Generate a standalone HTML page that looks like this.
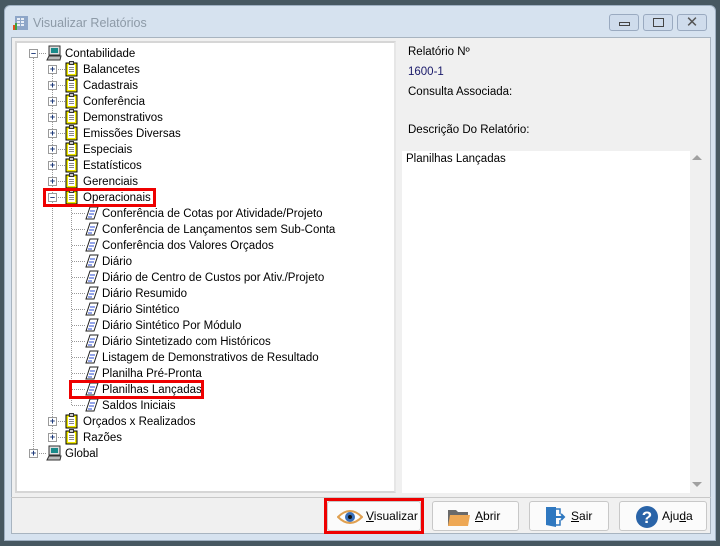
<!DOCTYPE html>
<html><head><meta charset="utf-8"><style>
*{box-sizing:border-box;margin:0;padding:0}
body{width:720px;height:546px;background:#475861;position:relative;overflow:hidden;font-family:"Liberation Sans",sans-serif;font-size:11.5px;color:#000}
.win{position:absolute;left:4px;top:5px;width:712px;height:536px;background:#d6e2ef;border:1px solid #9fb0c2;border-radius:6px 6px 0 0}
.title{position:absolute;left:33px;top:16px;font-size:12.5px;color:#8d9aa7}
.tb{position:absolute;top:14px;width:30px;height:17px;border:1px solid #9aaac0;border-radius:3px;background:#cfdcec}
.client{position:absolute;left:11px;top:37px;width:700px;height:497px;background:#f0f0f0;border:1px solid #a8b4c0}
.tree{position:absolute;left:15px;top:41px;width:381px;height:452px;background:#fff;border:2px solid #d6d6d6;border-right-color:#e6e6e6}
.row{position:absolute;height:16px;line-height:16px;white-space:nowrap}
.pm{position:absolute;width:9px;height:9px;border:1px solid #9a9a9a;background:#fff;font-size:9px;line-height:7px;text-align:center;color:#1d3a7a;font-weight:bold}
.hl{position:absolute;border-top:1px dotted #999;height:0}
.vl{position:absolute;border-left:1px dotted #999;width:0}
.red{position:absolute;border:3px solid #e00}
.btn{position:absolute;top:501px;height:30px;background:#fbfbfb;border:1px solid #c8c8c8;border-radius:3px;font-size:12px;line-height:28px}
.u{text-decoration:underline}
</style></head><body>
<div class="win"></div>
<svg style="position:absolute;left:13px;top:15px" width="16" height="16"><rect x="2" y="1" width="13" height="14" fill="#8ea6c8"/><g fill="#e8eef6"><rect x="4" y="3" width="3" height="2"/><rect x="8" y="3" width="3" height="2"/><rect x="4" y="6" width="3" height="2"/><rect x="8" y="6" width="3" height="2"/><rect x="4" y="9" width="3" height="2"/><rect x="8" y="9" width="3" height="2"/></g><rect x="0" y="10" width="2" height="5" fill="#e05020"/><rect x="2" y="8" width="2" height="7" fill="#40a040"/></svg>
<div class="title">Visualizar Relatórios</div>
<div class="tb" style="left:609px"><div style="position:absolute;left:9px;top:7px;width:11px;height:4px;border:1px solid #444"></div></div>
<div class="tb" style="left:643px"><div style="position:absolute;left:9px;top:3px;width:11px;height:9px;border:1px solid #444"></div></div>
<div class="tb" style="left:677px;font-size:15px;text-align:center;line-height:15px;color:#555">✕</div>
<div class="client"></div>
<div class="tree"></div>
<div id="t"></div>
<div style="position:absolute;left:408px;top:46px">Relatório Nº</div>
<div style="position:absolute;left:408px;top:66px;color:#1a1a6a">1600-1</div>
<div style="position:absolute;left:408px;top:86px">Consulta Associada:</div>
<div style="position:absolute;left:408px;top:124px">Descrição Do Relatório:</div>
<div style="position:absolute;left:402px;top:151px;width:304px;height:342px;background:#fff"></div>
<div style="position:absolute;left:690px;top:151px;width:16px;height:342px;background:#f0f0f0"></div>
<div style="position:absolute;left:692px;top:155px;width:0;height:0;border:5px solid transparent;border-bottom-color:#a0a0a0;border-top:0"></div>
<div style="position:absolute;left:692px;top:482px;width:0;height:0;border:5px solid transparent;border-top-color:#a0a0a0;border-bottom:0"></div>
<div style="position:absolute;left:406px;top:153px">Planilhas Lançadas</div>
<div style="position:absolute;left:11px;top:497px;width:700px;border-top:1px solid #c8c8c8"></div>
<div class="btn" style="left:327px;width:94px"><svg style="position:absolute;left:9px;top:7px" width="26" height="16"><path d="M1 8Q13-4 25 8Q13 20 1 8Z" fill="#fff" stroke="#e0a050" stroke-width="2"/><circle cx="13" cy="8" r="5" fill="#3a6fb8"/><circle cx="13" cy="8" r="2" fill="#111"/></svg><span style="position:absolute;left:38px"><span class="u">V</span>isualizar</span></div>
<div class="btn" style="left:432px;width:87px"><svg style="position:absolute;left:14px;top:5px" width="24" height="20"><path d="M1 3h8l2 2h10v14H1Z" fill="#6a6a6a"/><path d="M3 8h20l-2 11H1Z" fill="#eea855"/></svg><span style="position:absolute;left:42px"><span class="u">A</span>brir</span></div>
<div class="btn" style="left:529px;width:80px"><svg style="position:absolute;left:14px;top:3px" width="24" height="24"><path d="M2 2h10v20L2 20Z" fill="#2f78c0"/><path d="M12 4h4v5M16 15v5h-4" fill="none" stroke="#2f78c0" stroke-width="1.5"/><path d="M12 12h8M17 9l3 3-3 3" fill="none" stroke="#2f78c0" stroke-width="2"/></svg><span style="position:absolute;left:41px"><span class="u">S</span>air</span></div>
<div class="btn" style="left:619px;width:88px"><svg style="position:absolute;left:15px;top:3px" width="24" height="24"><circle cx="12" cy="12" r="11" fill="#2a64a8"/><text x="12" y="18" font-size="17" font-weight="bold" fill="#fff" text-anchor="middle" font-family="Liberation Sans">?</text></svg><span style="position:absolute;left:42px">Aju<span class="u">d</span>a</span></div>
<div class="red" style="left:324px;top:498px;width:100px;height:36px"></div>
<script>
var rows=[[0,'Contabilidade','-'],[1,'Balancetes','+'],[1,'Cadastrais','+'],[1,'Conferência','+'],[1,'Demonstrativos','+'],[1,'Emissões Diversas','+'],[1,'Especiais','+'],[1,'Estatísticos','+'],[1,'Gerenciais','+'],[1,'Operacionais','-'],
[2,'Conferência de Cotas por Atividade/Projeto'],[2,'Conferência de Lançamentos sem Sub-Conta'],[2,'Conferência dos Valores Orçados'],[2,'Diário'],[2,'Diário de Centro de Custos por Ativ./Projeto'],[2,'Diário Resumido'],[2,'Diário Sintético'],[2,'Diário Sintético Por Módulo'],[2,'Diário Sintetizado com Históricos'],[2,'Listagem de Demonstrativos de Resultado'],[2,'Planilha Pré-Pronta'],[2,'Planilhas Lançadas'],[2,'Saldos Iniciais'],
[1,'Orçados x Realizados','+'],[1,'Razões','+'],[0,'Global','+']];
var h='';
h+='<div class="vl" style="left:33px;top:58px;height:395px"></div>';
h+='<div class="vl" style="left:52px;top:74px;height:363px"></div>';
h+='<div class="vl" style="left:71px;top:202px;height:203px"></div>';
rows.forEach(function(r,i){var cy=53+16*i,l=r[0];
 if(l==0){h+='<div class="hl" style="left:37px;top:'+cy+'px;width:9px"></div><div class="pm" style="left:29px;top:'+(cy-4)+'px">'+(r[2]=='-'?'–':'+')+'</div>';
  h+='<svg style="position:absolute;left:46px;top:'+(cy-8)+'px" width="16" height="16"><rect x="3" y="1" width="11" height="9" fill="#ddd" stroke="#333"/><rect x="5" y="3" width="7" height="5" fill="#1a8a8a"/><path d="M1 15l2-4h12l-1 4Z" fill="#bbb" stroke="#333"/></svg>';
  h+='<div class="row" style="left:65px;top:'+(cy-7)+'px">'+r[1]+'</div>';}
 else if(l==1){h+='<div class="hl" style="left:56px;top:'+cy+'px;width:9px"></div><div class="pm" style="left:48px;top:'+(cy-4)+'px">'+(r[2]=='-'?'–':'+')+'</div>';
  h+='<svg style="position:absolute;left:65px;top:'+(cy-8)+'px" width="13" height="16"><rect x="0.5" y="1.5" width="12" height="14" fill="#000"/><rect x="1.5" y="2.5" width="10" height="12" fill="#f0e800"/><rect x="3" y="4" width="7" height="9" fill="#fff"/><path d="M4 6.5h5M4 8.5h5M4 10.5h5" stroke="#888"/><rect x="4.5" y="0.5" width="4" height="3" fill="#ccc" stroke="#333"/></svg><div class="row" style="left:83px;top:'+(cy-7)+'px">'+r[1]+'</div>';}
 else {h+='<div class="hl" style="left:72px;top:'+cy+'px;width:13px"></div>';
  h+='<svg style="position:absolute;left:85px;top:'+(cy-7)+'px" width="14" height="14"><path d="M5 1h8L9 13H1Z" fill="#fff" stroke="#222"/><path d="M5 5h5M4 8h5M3 11h4" stroke="#2a4ad0"/></svg>';
  h+='<div class="row" style="left:102px;top:'+(cy-7)+'px">'+r[1]+'</div>';}
});
h+='<div class="red" style="left:43px;top:188px;width:113px;height:19px"></div>';
h+='<div class="red" style="left:69px;top:380px;width:135px;height:19px"></div>';
document.getElementById('t').innerHTML=h;
</script>
</body></html>
